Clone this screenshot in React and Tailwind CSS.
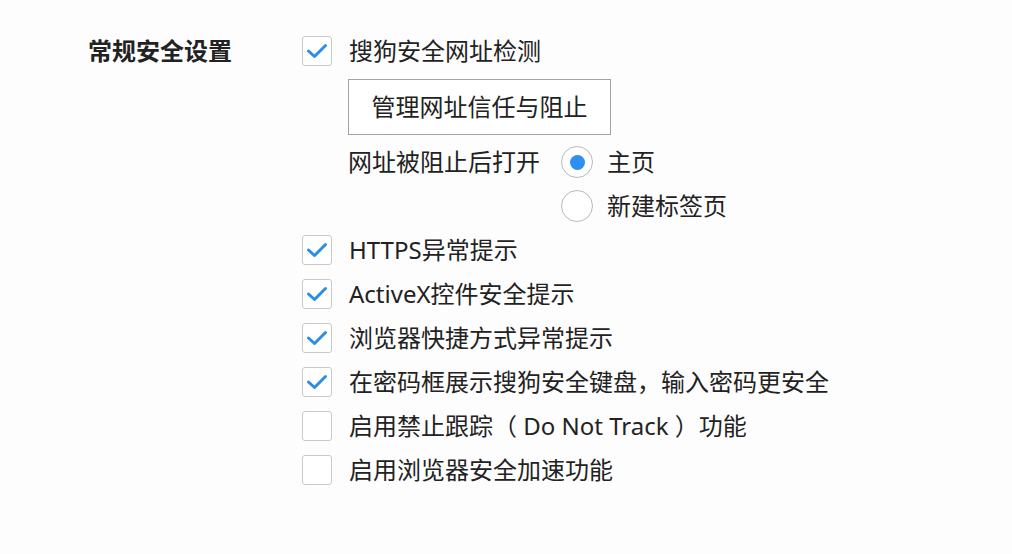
import React from "react";

const FONT = { fontFamily: '"Noto Sans", "Noto Sans CJK SC", sans-serif' };

function Checkbox({ checked }) {
  return (
    <div className="w-[30px] h-[30px] shrink-0 rounded-[3px] border border-[#c9c9c9] bg-white flex items-center justify-center">
      {checked && (
        <svg width="24" height="24" viewBox="0 0 24 24" fill="none">
          <path d="M3.5 12 L9.5 17.5 L20.5 6.5" stroke="#2a8ee9" strokeWidth="3" strokeLinecap="round" strokeLinejoin="round" />
        </svg>
      )}
    </div>
  );
}

function Radio({ checked }) {
  return (
    <div className="w-[32px] h-[32px] shrink-0 rounded-full border border-[#bdb8b8] bg-white flex items-center justify-center">
      {checked && <div className="w-[15px] h-[15px] rounded-full bg-[#2f8ff0]" />}
    </div>
  );
}

function CheckRow({ checked, children }) {
  return (
    <div className="h-[44px] flex items-center gap-[17px]">
      <Checkbox checked={checked} />
      <span className="leading-none whitespace-pre">{children}</span>
    </div>
  );
}

export default function App() {
  const items = [
    { checked: true, label: "HTTPS异常提示" },
    { checked: true, label: "ActiveX控件安全提示" },
    { checked: true, label: "浏览器快捷方式异常提示" },
    { checked: true, label: "在密码框展示搜狗安全键盘，输入密码更安全" },
    { checked: false, label: "启用禁止跟踪（ Do Not Track ）功能" },
    { checked: false, label: "启用浏览器安全加速功能" },
  ];

  return (
    <div className="w-[1012px] h-[554px] bg-[#fdfdfd] text-[#222] text-[24px] flex pl-[88px] pt-[29px]" style={FONT}>
      <div className="w-[214px] h-[44px] flex items-center font-bold leading-none">常规安全设置</div>
      <div className="flex flex-col">
        <CheckRow checked>搜狗安全网址检测</CheckRow>
        <div className="pl-[46px] flex flex-col">
          <button className="mt-[6px] w-[263px] h-[56px] border border-[#a3a3a3] bg-white flex items-center justify-center leading-none">
            管理网址信任与阻止
          </button>
          <div className="mt-[5px] flex">
            <div className="w-[213px] h-[44px] flex items-center leading-none">网址被阻止后打开</div>
            <div className="flex flex-col">
              <div className="h-[44px] flex items-center gap-[14px]">
                <Radio checked />
                <span className="leading-none">主页</span>
              </div>
              <div className="h-[44px] flex items-center gap-[14px]">
                <Radio />
                <span className="leading-none">新建标签页</span>
              </div>
            </div>
          </div>
        </div>
        {items.map((it) => (
          <CheckRow key={it.label} checked={it.checked}>
            {it.label}
          </CheckRow>
        ))}
      </div>
    </div>
  );
}
